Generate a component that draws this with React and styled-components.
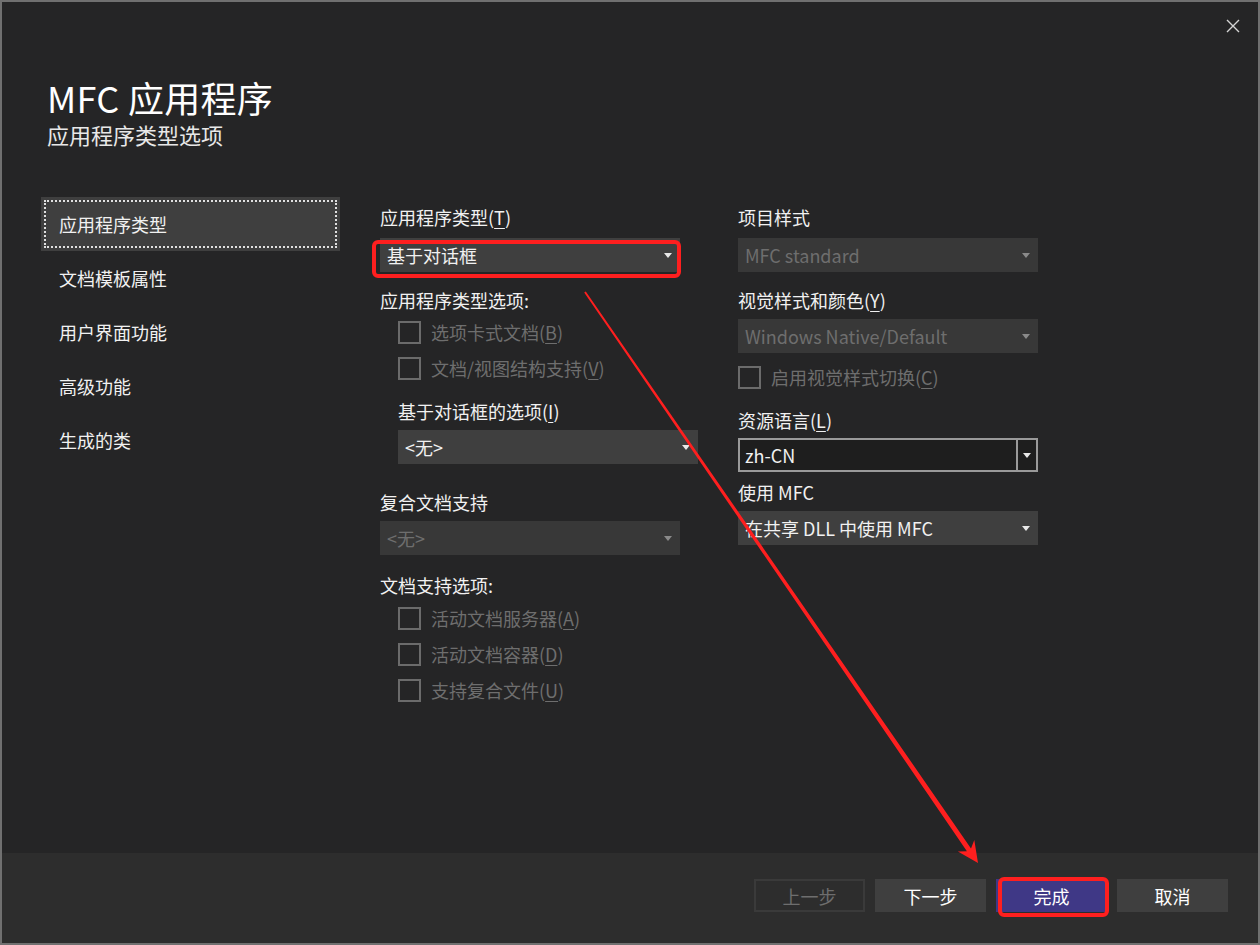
import React from "react";
import styled, { createGlobalStyle } from "styled-components";

const GlobalStyle = createGlobalStyle`
  html, body {
    margin: 0;
    padding: 0;
    background: #252526;
  }
  body {
    font-family: "Microsoft YaHei UI", "Noto Sans CJK SC", "Noto Sans", sans-serif;
    -webkit-font-smoothing: antialiased;
  }
`;

const colors = {
  bg: "#252526",
  footer: "#2d2d2d",
  border: "#707070",
  control: "#3f3f3f",
  controlOff: "#383838",
  text: "#f1f1f1",
  textOff: "#6e6e6e",
  red: "#fe1f1f",
  accent: "#3f3886",
};

const Window = styled.div`
  position: relative;
  width: 1260px;
  height: 945px;
  box-sizing: border-box;
  border: 2px solid ${colors.border};
  background: ${colors.bg};
  display: flex;
  flex-direction: column;
  overflow: hidden;
`;

const Main = styled.div`
  flex: 1;
  display: flex;
  flex-direction: column;
`;

const TopBar = styled.div`
  height: 48px;
  display: flex;
  justify-content: flex-end;
  align-items: flex-start;
  padding-right: 10px;
`;

const CloseButton = styled.button`
  width: 30px;
  height: 30px;
  margin-top: 9px;
  padding: 0;
  border: none;
  background: transparent;
  display: flex;
  align-items: center;
  justify-content: center;
  cursor: pointer;
`;

const Header = styled.div`
  margin-top: 24px;
  padding-left: 45px;
`;

const Title = styled.div`
  font-size: 36px;
  line-height: 46px;
  color: #ffffff;
  letter-spacing: 0.3px;
`;

const Subtitle = styled.div`
  font-size: 22px;
  line-height: 28px;
  color: #e8e8e8;
`;

const Body = styled.div`
  margin-top: 49px;
  padding-left: 39px;
  display: flex;
  align-items: flex-start;
`;

const Nav = styled.div`
  width: 299px;
  display: flex;
  flex-direction: column;
`;

const NavItem = styled.div`
  height: 54px;
  display: flex;
  align-items: center;
  padding-left: 18px;
  font-size: 18px;
  color: ${colors.text};
  background: ${(p) => (p.active ? colors.control : "transparent")};
  outline: ${(p) => (p.active ? "2px dotted #e0e0e0" : "none")};
  outline-offset: -5px;
`;

const Column = styled.div`
  width: ${(p) => p.width}px;
  margin-left: 40px;
  padding-top: 8px;
  display: flex;
  flex-direction: column;
  align-items: flex-start;
`;

const Label = styled.div`
  height: 24px;
  line-height: 24px;
  font-size: 18px;
  color: ${colors.text};
  margin-top: ${(p) => p.mt || 0}px;
  margin-left: ${(p) => p.indent || 0}px;
  white-space: nowrap;
`;

const Key = styled.span`
  text-decoration: underline;
  text-underline-offset: 3px;
  text-decoration-thickness: 1px;
`;

const ComboBox = styled.div`
  position: relative;
  width: 300px;
  height: 34px;
  box-sizing: border-box;
  margin-top: ${(p) => p.mt || 0}px;
  margin-left: ${(p) => p.indent || 0}px;
  padding-left: 7px;
  display: flex;
  align-items: center;
  justify-content: space-between;
  background: ${(p) => (p.disabled ? colors.controlOff : colors.control)};
  color: ${(p) => (p.disabled ? colors.textOff : colors.text)};
  font-size: 18px;
  white-space: nowrap;
`;

const Caret = styled.span`
  width: 0;
  height: 0;
  margin-right: ${(p) => (p.flush ? 0 : 8)}px;
  border-left: 4.5px solid transparent;
  border-right: 4.5px solid transparent;
  border-top: 5px solid ${(p) => (p.disabled ? "#8a8a8a" : "#e8e8e8")};
`;

const EditCombo = styled.div`
  width: 300px;
  height: 34px;
  box-sizing: border-box;
  margin-top: ${(p) => p.mt || 0}px;
  border: 2px solid #9a9a9a;
  background: #1e1e1e;
  display: flex;
  font-size: 18px;
  color: ${colors.text};
`;

const EditField = styled.div`
  flex: 1;
  display: flex;
  align-items: center;
  padding-left: 5px;
  border-right: 2px solid #9a9a9a;
`;

const EditButton = styled.div`
  width: 18px;
  display: flex;
  align-items: center;
  justify-content: center;
`;

const CheckRow = styled.div`
  height: 36px;
  display: flex;
  align-items: center;
  margin-top: ${(p) => p.mt || 0}px;
  margin-left: ${(p) => p.indent || 0}px;
  font-size: 18px;
  color: ${colors.textOff};
  white-space: nowrap;
`;

const CheckBox = styled.span`
  width: 23px;
  height: 23px;
  box-sizing: border-box;
  border: 2px solid #6b6b6b;
  margin-right: 10px;
`;

const Highlight = styled.div`
  position: relative;
  align-self: flex-start;
  margin-top: ${(p) => p.mt || 0}px;
  &::after {
    content: "";
    position: absolute;
    top: ${(p) => p.box[0]}px;
    right: ${(p) => p.box[1]}px;
    bottom: ${(p) => p.box[2]}px;
    left: ${(p) => p.box[3]}px;
    border: 4px solid ${colors.red};
    border-radius: 6px;
    pointer-events: none;
  }
`;

const Footer = styled.div`
  height: 90px;
  background: ${colors.footer};
  display: flex;
  justify-content: flex-end;
  align-items: flex-start;
  gap: 10px;
  padding: 26px 30px 0 0;
  box-sizing: border-box;
`;

const Button = styled.button`
  width: 111px;
  height: 33px;
  box-sizing: border-box;
  padding: 0;
  font-family: inherit;
  font-size: 18px;
  border: 2px solid
    ${(p) => (p.disabled ? "#3a3a3a" : p.primary ? colors.accent : colors.control)};
  background: ${(p) =>
    p.disabled ? "transparent" : p.primary ? colors.accent : colors.control};
  color: ${(p) => (p.disabled ? colors.textOff : "#ffffff")};
`;

const Overlay = styled.svg`
  position: absolute;
  top: -2px;
  left: -2px;
  pointer-events: none;
`;

// annotation arrow drawn over the dialog, tapering from the combo to the finish button
const arrowPoints = (() => {
  const s = [585, 292];
  const tip = [978, 863];
  const dx = tip[0] - s[0];
  const dy = tip[1] - s[1];
  const len = Math.hypot(dx, dy);
  const u = [dx / len, dy / len];
  const n = [-u[1], u[0]];
  const at = (p, a, b) => [p[0] + u[0] * a + n[0] * b, p[1] + u[1] * a + n[1] * b];
  const pts = [
    at(s, 0, 1),
    at(tip, -16, 2.5),
    at(tip, -21, 10),
    tip,
    at(tip, -21, -10),
    at(tip, -16, -2.5),
    at(s, 0, -1),
  ];
  return pts.map((p) => p.map((v) => v.toFixed(1)).join(",")).join(" ");
})();

const navItems = ["应用程序类型", "文档模板属性", "用户界面功能", "高级功能", "生成的类"];

export default function App() {
  return (
    <>
      <GlobalStyle />
      <Window>
        <Main>
          <TopBar>
            <CloseButton aria-label="关闭">
              <svg width="14" height="14" viewBox="0 0 14 14">
                <path d="M1 1 L13 13 M13 1 L1 13" stroke="#d4d4d4" strokeWidth="1.4" />
              </svg>
            </CloseButton>
          </TopBar>
          <Header>
            <Title>MFC 应用程序</Title>
            <Subtitle>应用程序类型选项</Subtitle>
          </Header>
          <Body>
            <Nav>
              {navItems.map((item, i) => (
                <NavItem key={item} active={i === 0}>
                  {item}
                </NavItem>
              ))}
            </Nav>

            <Column width={318}>
              <Label>
                应用程序类型(<Key>T</Key>)
              </Label>
              <Highlight mt={9} box={[2, -1, -6, -8]}>
                <ComboBox>
                  基于对话框
                  <Caret />
                </ComboBox>
              </Highlight>
              <Label mt={16}>应用程序类型选项:</Label>
              <CheckRow mt={2} indent={18}>
                <CheckBox />
                选项卡式文档(<Key>B</Key>)
              </CheckRow>
              <CheckRow indent={18}>
                <CheckBox />
                文档/视图结构支持(<Key>V</Key>)
              </CheckRow>
              <Label mt={13} indent={18}>
                基于对话框的选项(<Key>I</Key>)
              </Label>
              <ComboBox mt={7} indent={18}>
                &lt;无&gt;
                <Caret />
              </ComboBox>
              <Label mt={26}>复合文档支持</Label>
              <ComboBox mt={7} disabled>
                &lt;无&gt;
                <Caret disabled />
              </ComboBox>
              <Label mt={18}>文档支持选项:</Label>
              <CheckRow mt={3} indent={18}>
                <CheckBox />
                活动文档服务器(<Key>A</Key>)
              </CheckRow>
              <CheckRow indent={18}>
                <CheckBox />
                活动文档容器(<Key>D</Key>)
              </CheckRow>
              <CheckRow indent={18}>
                <CheckBox />
                支持复合文件(<Key>U</Key>)
              </CheckRow>
            </Column>

            <Column width={300}>
              <Label>项目样式</Label>
              <ComboBox mt={9} disabled>
                MFC standard
                <Caret disabled />
              </ComboBox>
              <Label mt={16}>
                视觉样式和颜色(<Key>Y</Key>)
              </Label>
              <ComboBox mt={7} disabled>
                Windows Native/Default
                <Caret disabled />
              </ComboBox>
              <CheckRow mt={6}>
                <CheckBox />
                启用视觉样式切换(<Key>C</Key>)
              </CheckRow>
              <Label mt={13}>
                资源语言(<Key>L</Key>)
              </Label>
              <EditCombo mt={6}>
                <EditField>zh-CN</EditField>
                <EditButton>
                  <Caret flush />
                </EditButton>
              </EditCombo>
              <Label mt={8}>使用 MFC</Label>
              <ComboBox mt={7}>
                在共享 DLL 中使用 MFC
                <Caret />
              </ComboBox>
            </Column>
          </Body>
        </Main>

        <Footer>
          <Button disabled>上一步</Button>
          <Button>下一步</Button>
          <Highlight box={[-2, -2, -5, 2]}>
            <Button primary>完成</Button>
          </Highlight>
          <Button>取消</Button>
        </Footer>

        <Overlay width="1260" height="945" viewBox="0 0 1260 945">
          <polygon points={arrowPoints} fill={colors.red} />
        </Overlay>
      </Window>
    </>
  );
}
